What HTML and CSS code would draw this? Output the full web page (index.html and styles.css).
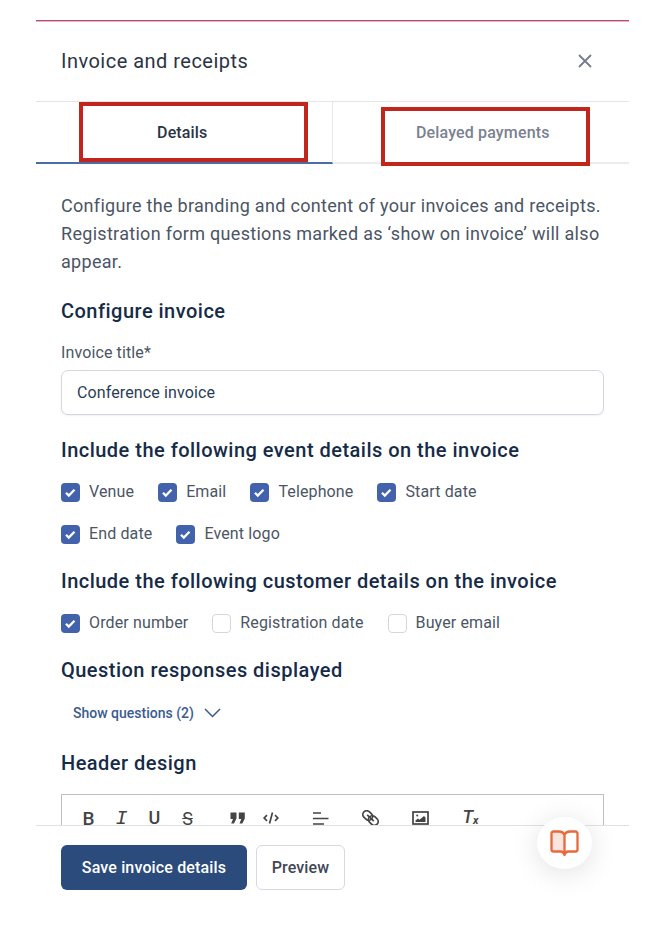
FILE: index.html
```html
<!DOCTYPE html>
<html lang="en">
<head>
  <meta charset="UTF-8" />
  <meta name="viewport" content="width=device-width, initial-scale=1" />
  <title>Invoice and receipts</title>
  <link rel="stylesheet" href="styles.css">
</head>
<body>

<div class="panel">
  <header class="panel-header">
    <h1>Invoice and receipts</h1>
    <button type="button" class="close-btn" aria-label="Close">
      <svg width="14" height="14" viewBox="0 0 14 14"><path d="M1 1l12 12M13 1L1 13"/></svg>
    </button>
  </header>

  <nav class="tabs">
    <button type="button" class="tab active">Details<span class="highlight highlight-details"></span></button>
    <button type="button" class="tab">Delayed payments<span class="highlight highlight-delayed"></span></button>
  </nav>

  <main class="content">
    <p class="intro">Configure the branding and content of your invoices and receipts. Registration form questions marked as ‘show on invoice’ will also appear.</p>

    <h2>Configure invoice</h2>
    <label class="field-label" for="invoice-title">Invoice title*</label>
    <input type="text" id="invoice-title" class="field" value="Conference invoice" />

    <h2 class="h-event">Include the following event details on the invoice</h2>
    <div class="checks">
      <label class="check"><span class="box on"><svg viewBox="0 0 19 19"><path d="M5 9.800l2.800 2.800 5.700-5.800"/></svg></span>Venue</label>
      <label class="check"><span class="box on"><svg viewBox="0 0 19 19"><path d="M5 9.800l2.800 2.800 5.700-5.800"/></svg></span>Email</label>
      <label class="check"><span class="box on"><svg viewBox="0 0 19 19"><path d="M5 9.800l2.800 2.800 5.700-5.800"/></svg></span>Telephone</label>
      <label class="check"><span class="box on"><svg viewBox="0 0 19 19"><path d="M5 9.800l2.800 2.800 5.700-5.800"/></svg></span>Start date</label>
      <label class="check"><span class="box on"><svg viewBox="0 0 19 19"><path d="M5 9.800l2.800 2.800 5.700-5.800"/></svg></span>End date</label>
      <label class="check"><span class="box on"><svg viewBox="0 0 19 19"><path d="M5 9.800l2.800 2.800 5.700-5.800"/></svg></span>Event logo</label>
    </div>

    <h2 class="h-customer">Include the following customer details on the invoice</h2>
    <div class="checks">
      <label class="check"><span class="box on"><svg viewBox="0 0 19 19"><path d="M5 9.800l2.800 2.800 5.700-5.800"/></svg></span>Order number</label>
      <label class="check"><span class="box"></span>Registration date</label>
      <label class="check"><span class="box"></span>Buyer email</label>
    </div>

    <h2 class="h-question">Question responses displayed</h2>
    <button type="button" class="show-questions">Show questions (2)
      <svg width="17" height="10" viewBox="0 0 17 10"><path d="M1 1l7.500 7.500L16 1"/></svg>
    </button>

    <h2 class="h-header">Header design</h2>
    <div class="editor">
      <div class="toolbar">
        <span class="tool bold">B</span>
        <span class="tool italic">I</span>
        <span class="tool underline">U</span>
        <span class="tool strike">S</span>
        <span class="tool quote"><svg width="16" height="12" viewBox="0 0 16 12"><path class="fill" d="M.5.5h6v6L4 11.500H1.200L3 7H.5zM8.800.5h6v6l-2.500 5H9.500L11.300 7H8.800z"/></svg></span>
        <span class="tool code"><svg width="16" height="12" viewBox="0 0 16 12"><path d="M4 3.200L1.200 6 4 8.800M12 3.200L14.800 6 12 8.800M9.500.5l-3 11"/></svg></span>
        <span class="tool align"><svg width="17" height="14" viewBox="0 0 17 14"><path d="M1 2h8M1 7.500h15.500M1 13h11"/></svg></span>
        <span class="tool link"><svg width="17" height="16" viewBox="0 0 17 16"><g transform="rotate(42 8.500 8)"><rect x="-.5" y="4.200" width="10.500" height="7.600" rx="3.800"/><rect x="7" y="4.200" width="10.500" height="7.600" rx="3.800"/><path d="M4 8h9"/></g></svg></span>
        <span class="tool image"><svg width="17" height="14" viewBox="0 0 17 14"><rect x="1" y="1" width="15" height="12"/><path class="fill" d="M3.500 11V9.500l2.500-2 1.500 1.200L12 5l1.500 1.500V11z"/><circle class="fill" cx="5.200" cy="4.500" r="1"/></svg></span>
        <span class="tool clear">T<sub>x</sub></span>
      </div>
    </div>
  </main>

  <footer class="panel-footer">
    <button type="button" class="btn btn-primary">Save invoice details</button>
    <button type="button" class="btn btn-default">Preview</button>
  </footer>

  <button type="button" class="help-btn" aria-label="Help">
    <svg width="29" height="27" viewBox="0 0 29 27">
      <path class="page-tint" d="M14.500 5C13.500 2.500 11.500 1.500 9 1.500H3.500A2 2 0 0 0 1.500 3.500V19.500A2 2 0 0 0 3.500 21.500H10.500C12.500 21.500 14 22.500 14.500 25Z"/>
      <path class="page-line" d="M14.500 5C13.500 2.500 11.500 1.500 9 1.500H3.500A2 2 0 0 0 1.500 3.500V19.500A2 2 0 0 0 3.500 21.500H10.500C12.500 21.500 14 22.500 14.500 25C15 22.500 16.500 21.500 18.500 21.500H25.500A2 2 0 0 0 27.500 19.500V3.500A2 2 0 0 0 25.500 1.500H20C17.500 1.500 15.500 2.500 14.500 5V24"/>
    </svg>
  </button>
</div>

</body>
</html>
```

FILE: styles.css
```css
* {
  box-sizing: border-box;
}
body {
  margin: 0;
  height: 948px;
  background-color: #fff;
  font-family: Roboto, "Liberation Sans", sans-serif;
  font-size: 16px;
  color: #4b5565;
  overflow: hidden;
}
button {
  font-family: inherit;
  font-size: inherit;
  padding: 0;
  border: none;
  background: none;
  cursor: pointer;
}
svg {
  display: block;
  fill: none;
}
.panel {
  position: relative;
  width: 593px;
  height: 890px;
  margin: 20px 0 0 36px;
  border-top: 1px solid #b9497a;
  box-shadow: inset 0 1px 0 #e3b3c8;
  display: flex;
  flex-direction: column;
}

/* header */
.panel-header {
  height: 81px;
  padding: 0 37px 0 25px;
  display: flex;
  align-items: center;
  justify-content: space-between;
  border-bottom: 1px solid #e2e4e9;
}
.panel-header h1 {
  margin: 0;
  font-size: 20px;
  font-weight: 400;
  letter-spacing: 0.48px;
  color: #2c3444;
}
.close-btn svg {
  stroke: #747c8b;
  stroke-width: 1.800;
}

/* tabs */
.tabs {
  display: flex;
  height: 62px;
}
.tab {
  position: relative;
  width: 297px;
  padding-left: 4px;
  font-size: 16px;
  font-weight: 500;
  letter-spacing: 0.15px;
  color: #7a8190;
  border-bottom: 2px solid #ebecf0;
}
.tab.active {
  padding: 0 3px 0 0;
  color: #2c3444;
  border-right: 1px solid #e6e8ed;
  border-bottom: 2px solid #4a6da7;
}
.highlight {
  position: absolute;
  border: 4px solid #c0261c;
}
.highlight-details {
  left: 43px;
  top: 0;
  width: 229px;
  height: 60px;
}
.highlight-delayed {
  left: 48px;
  top: 5px;
  width: 209px;
  height: 59px;
}

/* content */
.content {
  flex: 1;
  min-height: 0;
  padding: 28px 25px 0;
  overflow: hidden;
}
.intro {
  margin: 0 -10px 21px 0;
  font-size: 18px;
  line-height: 28px;
  letter-spacing: 0.3px;
}
h2 {
  margin: 0;
  font-size: 20px;
  line-height: 28px;
  font-weight: 500;
  letter-spacing: 0.48px;
  color: #162b48;
}
.field-label {
  display: block;
  margin-top: 18px;
  line-height: 20px;
  letter-spacing: 0.12px;
}
.field {
  display: block;
  width: 543px;
  height: 45px;
  margin-top: 7px;
  padding: 0 15px;
  border: 1px solid #d3d7de;
  border-radius: 7px;
  font-family: inherit;
  font-size: 16px;
  letter-spacing: 0.12px;
  color: #2a3d57;
  box-shadow: 0 1px 2px rgba(0, 0, 0, 0.06);
}
.h-event {
  margin-top: 21px;
}
.checks {
  display: flex;
  flex-wrap: wrap;
  width: 460px;
  gap: 22px 24px;
  margin-top: 18px;
}
.check {
  display: flex;
  align-items: center;
  gap: 9px;
  height: 20px;
  line-height: 20px;
  letter-spacing: 0.13px;
}
.box {
  width: 19px;
  height: 19px;
  border: 1px solid #d3d7de;
  border-radius: 4px;
}
.box.on {
  border: none;
  background-color: #4262ab;
}
.box svg {
  stroke: #fff;
  stroke-width: 2.300;
}
.h-customer {
  margin-top: 23px;
}
.h-question {
  margin-top: 23px;
}
.show-questions {
  display: flex;
  align-items: center;
  gap: 10px;
  height: 20px;
  margin: 19px 0 0 12px;
  font-size: 14px;
  font-weight: 500;
  color: #3a5a91;
}
.show-questions svg {
  stroke: #3a5a91;
  stroke-width: 1.500;
}
.h-header {
  margin-top: 26px;
}

/* rich text editor */
.editor {
  width: 543px;
  height: 160px;
  margin-top: 17px;
  border: 1px solid #bebfc1;
}
.toolbar {
  display: flex;
  height: 48px;
  padding-left: 18px;
}
.tool {
  display: flex;
  align-items: center;
  justify-content: center;
  width: 17px;
  height: 46px;
  font-size: 18px;
  color: #444;
}
.tool svg {
  stroke: #444;
  stroke-width: 1.700;
}
.tool .fill {
  fill: #444;
  stroke: none;
}
.bold {
  font-size: 19px;
  font-weight: 500;
}
.italic {
  margin-left: 16px;
  font-family: "Liberation Mono", monospace;
  font-size: 20px;
  font-style: italic;
}
.underline {
  height: 44px;
  margin-left: 16px;
  font-weight: 500;
  text-decoration: underline;
  text-underline-offset: 3px;
}
.strike {
  margin-left: 16px;
  text-decoration: line-through;
}
.quote {
  height: 45px;
  margin-left: 33px;
}
.code {
  height: 45px;
  margin-left: 16px;
}
.align {
  margin-left: 33px;
}
.link {
  height: 45px;
  margin-left: 33px;
}
.image {
  margin-left: 33px;
}
.clear {
  height: 43px;
  margin-left: 33px;
  font-style: italic;
  font-weight: 500;
}
.clear sub {
  margin-top: 8px;
  font-size: 11px;
  font-weight: 700;
}

/* footer */
.panel-footer {
  display: flex;
  gap: 9px;
  height: 85px;
  padding: 19px 25px 0;
  border-top: 1px solid #dfe1e7;
}
.btn {
  height: 45px;
  border-radius: 6px;
  font-weight: 500;
}
.btn-primary {
  width: 186px;
  background-color: #2b4b7c;
  letter-spacing: 0.15px;
  color: #fff;
}
.btn-default {
  width: 89px;
  border: 1px solid #d6d9e2;
  letter-spacing: 0.1px;
  color: #3f4757;
}
.help-btn {
  position: absolute;
  left: 501px;
  top: 796px;
  width: 55px;
  height: 52px;
  border-radius: 50%;
  background-color: #fff;
  box-shadow: 0 4px 28px rgba(0, 0, 0, 0.12);
  display: flex;
  align-items: center;
  justify-content: center;
}
.page-tint {
  fill: #fbe6df;
}
.page-line {
  stroke: #e9683c;
  stroke-width: 2.300;
  stroke-linejoin: round;
}
```
